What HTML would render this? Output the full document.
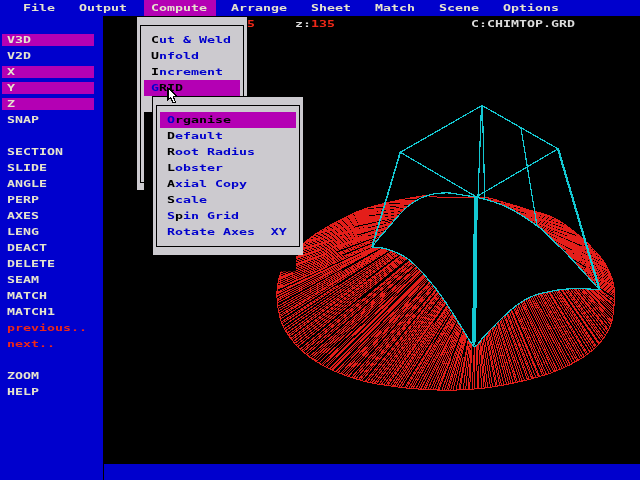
<!DOCTYPE html>
<html><head><meta charset="utf-8"><title>CHIMTOP.GRD</title>
<style>
html,body{margin:0;padding:0}
body{width:640px;height:480px;background:#000;overflow:hidden;position:relative}
div{position:absolute}
.t{white-space:pre;font:bold 9.2px "DejaVu Sans Mono","Liberation Mono",monospace;line-height:8px;height:8px;transform:scaleX(1.4445);transform-origin:0 0;will-change:transform;margin-left:-0.6px}
.t b{font-weight:bold}
.bar{background:#b400b4;left:2px;width:92px;height:12px}
</style></head><body>
<div style="left:0;top:0;width:640px;height:16px;background:#0000cd"></div>
<div style="left:0;top:16px;width:103px;height:464px;background:#0000cd"></div>
<div style="left:104px;top:464px;width:536px;height:16px;background:#0000cd"></div>
<div style="left:144px;top:0;width:72px;height:16px;background:#b400b4"></div>

<div class="bar" style="top:34px"></div>
<div class="bar" style="top:66px"></div>
<div class="bar" style="top:82px"></div>
<div class="bar" style="top:98px"></div>
<div class="t " style="left:24px;top:4px;color:#e6e4cd">File</div>
<div class="t " style="left:80px;top:4px;color:#e6e4cd">Output</div>
<div class="t " style="left:152px;top:4px;color:#e6e4cd">Compute</div>
<div class="t " style="left:232px;top:4px;color:#e6e4cd">Arrange</div>
<div class="t " style="left:312px;top:4px;color:#e6e4cd">Sheet</div>
<div class="t " style="left:376px;top:4px;color:#e6e4cd">Match</div>
<div class="t " style="left:440px;top:4px;color:#e6e4cd">Scene</div>
<div class="t " style="left:504px;top:4px;color:#e6e4cd">Options</div>
<div class="t " style="left:8px;top:36px;color:#e6e4cd">V3D</div>
<div class="t " style="left:8px;top:52px;color:#e6e4cd">V2D</div>
<div class="t " style="left:8px;top:68px;color:#e6e4cd">X</div>
<div class="t " style="left:8px;top:84px;color:#e6e4cd">Y</div>
<div class="t " style="left:8px;top:100px;color:#e6e4cd">Z</div>
<div class="t " style="left:8px;top:116px;color:#e6e4cd">SNAP</div>
<div class="t " style="left:8px;top:148px;color:#e6e4cd">SECTION</div>
<div class="t " style="left:8px;top:164px;color:#e6e4cd">SLIDE</div>
<div class="t " style="left:8px;top:180px;color:#e6e4cd">ANGLE</div>
<div class="t " style="left:8px;top:196px;color:#e6e4cd">PERP</div>
<div class="t " style="left:8px;top:212px;color:#e6e4cd">AXES</div>
<div class="t " style="left:8px;top:228px;color:#e6e4cd">LENG</div>
<div class="t " style="left:8px;top:244px;color:#e6e4cd">DEACT</div>
<div class="t " style="left:8px;top:260px;color:#e6e4cd">DELETE</div>
<div class="t " style="left:8px;top:276px;color:#e6e4cd">SEAM</div>
<div class="t " style="left:8px;top:292px;color:#e6e4cd">MATCH</div>
<div class="t " style="left:8px;top:308px;color:#e6e4cd">MATCH1</div>
<div class="t " style="left:8px;top:324px;color:#ee2818">previous..</div>
<div class="t " style="left:8px;top:340px;color:#ee2818">next..</div>
<div class="t " style="left:8px;top:372px;color:#e6e4cd">ZOOM</div>
<div class="t " style="left:8px;top:388px;color:#e6e4cd">HELP</div>
<div class="t " style="left:248px;top:20px;color:#ee2818">5</div>
<div class="t " style="left:296px;top:20px;color:#dcdcdc">z:</div>
<div class="t " style="left:312px;top:20px;color:#ee2818">135</div>
<div class="t " style="left:472px;top:20px;color:#dcdcdc">C:CHIMTOP.GRD</div>
<svg width="640" height="480" viewBox="0 0 640 480" style="position:absolute;left:0;top:0">
<defs><clipPath id="rc"><path d="M426.0 195.7C430.0 195.7 430.2 196.9 440.0 197.2C449.8 197.5 475.0 196.8 485.0 197.5C495.0 198.2 494.2 199.7 500.0 201.2C505.8 202.8 515.0 205.5 520.0 207.0C525.0 208.5 526.2 209.2 530.0 210.3C533.8 211.4 538.7 212.2 543.0 213.6C547.3 215.0 551.7 216.7 556.0 219.0C560.3 221.3 564.7 224.4 569.0 227.6C573.3 230.8 577.6 234.1 582.0 238.0C586.4 241.9 591.2 246.7 595.1 251.0C599.0 255.3 602.7 259.4 605.5 264.0C608.3 268.6 610.5 273.7 612.0 278.3C613.5 282.9 614.3 286.6 614.6 291.4C614.9 296.2 614.6 301.2 613.9 307.0C613.2 312.8 613.1 319.7 610.3 326.2C607.5 332.7 602.7 340.1 597.2 345.9C591.7 351.6 585.2 356.2 577.5 360.7C569.8 365.2 561.1 369.2 551.2 372.8C541.4 376.4 529.3 379.5 518.4 382.0C507.5 384.5 496.5 386.5 485.6 387.9C474.7 389.3 463.7 390.0 452.8 390.2C441.9 390.4 429.6 389.8 420.0 389.2C410.4 388.6 404.4 387.9 395.0 386.6C385.6 385.3 374.2 384.0 363.8 381.2C353.3 378.5 341.4 374.2 332.5 370.3C323.6 366.4 316.9 362.2 310.6 357.8C304.4 353.4 299.4 348.7 295.0 343.8C290.6 338.8 286.7 333.3 284.0 328.1C281.3 322.9 279.9 317.7 278.8 312.5C277.6 307.3 277.1 301.6 276.9 296.9C276.7 292.2 277.1 288.6 277.8 284.4C278.5 280.2 279.5 275.6 280.9 271.9C282.3 268.2 284.0 265.1 286.0 262.0C288.0 258.9 290.1 256.0 293.0 253.0C295.9 250.0 300.5 246.4 303.5 243.8C306.5 241.1 307.6 239.7 311.0 237.2C314.4 234.7 318.8 231.9 324.1 228.8C329.4 225.6 336.6 221.5 342.9 218.4C349.1 215.3 355.7 212.2 361.6 210.0C367.5 207.8 373.6 206.3 378.5 204.9C383.4 203.5 386.8 202.7 391.0 201.8C395.2 200.8 399.3 200.0 403.5 199.2C407.7 198.5 412.2 197.6 416.0 197.0C419.8 196.4 422.0 195.7 426.0 195.7Z"/></clipPath><clipPath id="ns"><path clip-rule="evenodd" d="M0 0H640V480H0ZM372.0 247.0C372.7 246.1 374.3 243.9 376.0 241.8C377.7 239.6 380.2 236.6 382.2 234.2C384.3 231.9 386.4 229.8 388.5 227.4C390.6 225.0 392.7 222.3 394.8 219.9C396.8 217.5 398.9 215.2 401.0 213.0C403.1 210.8 405.2 208.5 407.2 206.8C409.3 205.0 411.4 203.8 413.5 202.4C415.6 201.0 417.7 199.7 419.8 198.6C421.8 197.5 423.7 196.9 426.0 196.1C428.3 195.3 431.0 194.4 433.5 193.9C436.0 193.4 438.2 193.2 441.0 193.1C443.8 192.9 446.4 192.7 450.0 193.0C453.6 193.3 458.3 194.3 462.5 195.0C466.7 195.7 470.8 196.2 475.0 197.0C479.2 197.8 483.3 198.8 487.5 200.0C491.7 201.2 495.8 202.6 500.0 204.2C504.2 205.9 508.3 207.8 512.5 210.0C516.7 212.2 520.8 214.8 525.0 217.5C529.2 220.2 534.5 224.1 537.5 226.2C540.5 228.4 539.9 227.7 543.0 230.5C546.1 233.3 551.7 238.9 556.0 243.2C560.3 247.5 564.7 251.6 569.0 256.2C573.3 260.8 576.9 264.9 582.0 270.5C587.1 276.1 596.7 286.6 599.6 289.8C597.1 289.6 588.5 288.9 584.4 288.8C580.3 288.6 578.1 288.7 575.0 288.8C571.9 288.8 568.7 288.9 565.6 289.1C562.5 289.4 559.4 289.8 556.2 290.2C553.1 290.8 550.0 291.4 546.9 292.1C543.8 292.8 540.6 293.4 537.5 294.4C534.4 295.4 531.2 296.5 528.1 298.1C525.0 299.7 521.9 301.6 518.8 303.8C515.6 305.9 512.4 308.7 509.4 311.2C506.4 313.8 503.4 316.7 501.0 319.1C498.6 321.5 496.8 323.3 494.8 325.4C492.7 327.5 490.6 329.4 488.5 331.6C486.4 333.8 484.1 336.3 482.2 338.5C480.4 340.7 478.6 343.4 477.2 344.8C475.9 346.1 474.5 346.2 474.0 346.5C473.3 345.6 471.5 343.7 469.8 341.0C468.0 338.3 465.6 333.8 463.5 330.4C461.4 327.0 459.3 323.7 457.2 320.4C455.2 317.1 453.1 313.6 451.0 310.4C448.9 307.2 446.8 304.0 444.8 301.0C442.7 298.0 440.2 294.5 438.5 292.2C436.8 290.0 436.4 289.3 434.8 287.2C433.1 285.2 430.6 282.2 428.5 279.8C426.4 277.2 424.3 274.5 422.2 272.2C420.2 270.0 418.1 268.0 416.0 266.0C413.9 264.0 411.8 262.1 409.8 260.4C407.7 258.7 405.6 257.2 403.5 256.0C401.4 254.8 399.3 253.8 397.2 252.9C395.2 252.0 393.1 251.1 391.0 250.4C388.9 249.7 386.8 249.0 384.8 248.5C382.7 248.0 380.6 247.8 378.5 247.5C376.4 247.2 373.1 247.1 372.0 247.0Z"/></clipPath></defs>
<g clip-path="url(#rc)" shape-rendering="crispEdges"><g clip-path="url(#ns)">
<path fill="none" stroke="#e41e1a" stroke-width="1" d="M487.9 198.3L718.6 165.9M589.5 184.5L718.8 167.0M532.8 192.5L718.9 168.0M646.5 178.3L719.0 169.1M504.4 196.5L719.2 170.1M618.2 183.2L719.3 171.2M561.4 190.3L719.4 172.3M675.3 178.2L719.5 173.3M490.2 198.5L719.7 174.4M604.3 187.1L719.8 175.5M547.3 193.1L719.9 176.5M661.4 183.0L720.0 177.6M518.8 196.3L720.1 178.6M633.0 187.0L720.2 179.7M576.0 192.1L720.2 180.8M690.3 184.1L720.3 181.8M488.0 199.2L720.4 182.9M597.5 192.0L720.5 184.0M540.3 196.1L720.5 185.0M654.8 189.8L720.6 186.1M511.8 198.1L720.7 187.2M626.2 192.8L720.7 188.2M569.0 195.9L720.8 189.3M683.5 191.8L720.8 190.4M497.5 199.3L720.9 191.4M612.0 195.8L720.9 192.5M554.8 197.9L720.9 193.6M669.3 195.8L720.9 194.7M526.1 199.1L721.0 195.7M640.7 197.8L721.0 196.8M583.4 199.1L721.0 197.9M698.0 199.0L721.0 198.9M488.0 200.0L721.0 200.0M594.2 200.5L721.0 201.1M536.9 200.5L721.0 202.1M651.5 202.3L721.0 203.2M508.2 200.6L721.0 204.3M622.8 203.2L720.9 205.3M565.5 202.3L720.9 206.4M680.0 206.2L720.9 207.5M493.9 200.6L720.9 208.6M608.4 205.2L720.8 209.6M551.1 203.3L720.8 210.7M665.6 209.1L720.7 211.8M522.5 202.4L720.7 212.8M636.9 209.1L720.6 213.9M579.7 206.3L720.5 215.0M694.0 214.3L720.5 216.0M488.0 200.8L720.4 217.1M601.0 209.3L720.3 218.2M543.8 205.3L720.2 219.2M658.0 215.1L720.2 220.3M515.2 203.4L720.1 221.4M629.3 214.1L720.0 222.4M572.2 209.3L719.9 223.5M686.2 221.2L719.8 224.5M500.9 202.6L719.7 225.6M614.8 215.2L719.5 226.7M557.8 209.3L719.4 227.7M671.6 223.1L719.3 228.8M529.3 206.5L719.2 229.9M643.0 221.2L719.0 230.9M586.1 214.5L718.9 232.0M699.5 230.4L718.8 233.0M487.9 201.7L718.6 234.1M591.2 216.7L718.5 235.2M534.4 208.7L718.3 236.2M647.7 226.4L718.1 237.3M506.1 204.8L718.0 238.3M619.1 223.3L717.8 239.4M562.5 214.5L717.6 240.4M675.4 234.3L717.5 241.5M491.9 202.8L717.3 242.5M604.6 223.3L717.1 243.6M548.2 213.4L716.9 244.6M660.7 235.1L716.7 245.7M519.9 208.5L716.5 246.7M632.3 231.1L716.3 247.8M576.0 220.3L716.1 248.8M688.1 244.1L715.9 249.9M487.7 202.5L715.6 250.9M596.7 226.2L715.4 252.0M540.7 214.3L715.2 253.0M652.4 239.9L715.0 254.1M512.6 208.5L714.7 255.1M624.1 234.9L714.5 256.2M568.3 222.2L714.2 257.2M679.5 249.8L714.0 258.2M498.6 205.6L713.7 259.3M609.6 233.9L713.5 260.3M554.0 220.2L713.2 261.3M664.7 249.7L712.9 262.4M526.2 213.4L712.7 263.4M636.7 243.8L712.4 264.4M581.2 229.2L712.1 265.5M691.4 260.8L711.8 266.5M487.5 203.3L711.5 267.5M591.2 233.6L711.2 268.6M536.1 217.8L710.9 269.6M645.7 251.1L710.6 270.6M508.5 209.9L710.3 271.6M617.9 244.1L710.0 272.7M563.1 227.5L709.7 273.7M672.1 262.8L709.3 274.7M494.7 206.1L709.0 275.7M603.5 242.1L708.7 276.7M549.0 224.4L708.3 277.7M657.4 261.6L708.0 278.8M521.7 215.7L707.7 279.8M629.8 253.7L707.3 280.8M575.6 235.3L706.9 281.8M683.3 274.4L706.6 282.8M487.8 204.3L706.2 283.8M595.3 244.0L705.9 284.8M541.4 224.5L705.5 285.8M648.5 265.3L705.1 286.8M514.4 214.8L704.7 287.8M621.2 256.5L704.3 288.8M567.6 236.1L704.0 289.8M673.9 279.0L703.6 290.8M500.9 210.1L703.2 291.8M607.3 253.7L702.8 292.8M554.2 232.4L702.4 293.8M661.0 277.6L701.9 294.7M527.7 222.0L701.5 295.7M634.7 268.2L701.1 296.7M581.4 245.8L700.7 297.7M688.7 293.6L700.3 298.7M487.0 204.9L699.8 299.7M584.3 248.8L699.4 300.6M530.6 224.9L698.9 301.6M638.3 274.8L698.5 302.6M503.8 213.0L698.0 303.5M611.7 264.0L697.6 304.5M557.8 239.0L697.1 305.5M665.9 291.6L696.7 306.4M490.4 207.0L696.2 307.4M598.6 260.5L695.7 308.4M544.5 234.2L695.3 309.3M653.0 289.2L694.8 310.3M517.5 221.2L694.3 311.2M626.1 277.3L693.8 312.2M571.9 249.9L693.3 313.1M680.7 307.7L692.8 314.1M486.6 205.6L692.3 315.0M592.5 262.6L691.8 316.0M538.1 233.7L691.3 316.9M647.1 293.9L690.8 317.8M510.9 219.4L690.3 318.8M620.0 280.6L689.8 319.7M565.5 250.6L689.2 320.6M674.6 313.5L688.7 321.6M497.3 212.3L688.2 322.5M608.0 277.0L687.6 323.4M553.7 245.7L687.1 324.3M667.5 313.9L686.6 325.3M526.8 230.6L686.0 326.2M642.8 301.2L685.5 327.1M586.3 267.6L684.9 328.0M486.2 206.4L683.8 329.8M600.9 278.8L683.2 330.7M541.4 241.7L682.6 331.6M664.7 321.3L682.1 332.5M511.8 223.2L681.5 333.4M637.0 305.5L680.9 334.3M575.4 265.8L680.3 335.2M497.0 214.2L679.1 337.0M630.4 305.1L678.5 337.9M566.9 262.5L677.9 338.8M536.2 242.2L676.7 340.5M616.7 300.4L675.5 342.3M462.8 205.9L252.2 299.7M283.4 284.7L251.7 298.7M375.3 243.8L251.3 297.7M421.6 223.1L250.5 295.7M257.7 291.6L250.1 294.7M343.2 255.0L249.6 293.8M445.6 212.3L248.8 291.8M292.9 273.0L248.4 290.8M370.2 241.7L248.0 289.8M409.2 225.6L247.3 287.8M261.6 281.2L246.9 286.8M336.8 252.0L246.5 285.8M464.7 204.1L245.8 283.8M326.8 253.6L245.4 282.8M399.2 227.2L245.1 281.8M259.0 275.8L244.7 280.8M435.4 214.0L244.3 279.8M297.5 260.6L244.0 278.8M367.6 236.3L243.7 277.7M453.7 207.3L243.0 275.7M320.7 249.7L242.7 274.7M388.1 227.7L242.3 273.7M258.4 267.6L242.0 272.7M422.2 216.4L241.7 271.6M293.3 255.0L241.4 270.6M358.1 234.9L241.1 269.6M462.7 203.8L240.5 267.5M335.0 239.8L240.2 266.5M399.1 221.3L239.9 265.5M272.1 255.6L239.6 264.4M431.2 212.0L239.3 263.4M304.8 245.1L239.1 262.4M368.3 227.8L238.8 261.3M447.3 207.1L238.3 259.3M322.3 237.6L238.0 258.2M385.1 221.8L237.8 257.2M260.9 250.7L237.5 256.2M416.6 213.7L237.3 255.1M293.0 241.4L237.0 254.1M355.3 226.8L236.8 253.0M464.3 202.5L236.4 250.9M350.6 226.1L236.1 249.9M411.9 213.0L235.9 248.8M290.6 236.9L235.7 247.8M442.6 206.5L235.5 246.7M322.0 229.2L235.3 245.7M382.6 217.3L235.1 244.6M262.9 238.5L234.9 243.6M458.0 203.2L234.7 242.5M338.5 223.6L234.5 241.5M398.3 213.0L234.4 240.4M279.0 232.1L234.2 239.4M428.2 207.6L234.0 238.3M309.1 225.7L233.9 237.3M368.8 216.0L233.7 236.2M249.8 232.8L233.5 235.2M464.1 201.7L233.4 234.1M346.7 217.6L233.2 233.0M406.2 209.2L233.1 232.0M287.6 224.0L233.0 230.9M436.0 204.9L232.8 229.9M317.6 218.7L232.7 228.8M376.9 211.3L232.6 227.7M258.8 223.8L232.5 226.7M450.9 202.6L232.3 225.6M332.9 214.4L232.2 224.5M392.0 208.1L232.1 223.5M274.4 218.5L232.0 222.4M421.6 204.8L231.9 221.4M304.2 214.3L231.8 220.3M363.0 208.9L231.8 219.2M246.0 217.1L231.7 218.2M464.0 200.8L231.6 217.1M352.5 208.1L231.5 216.0M411.0 204.0L231.5 215.0M294.4 210.3L231.4 213.9M440.3 201.9L231.3 212.8M324.0 207.3L231.3 211.8M382.3 204.1L231.2 210.7M266.3 208.2L231.2 209.6M454.9 200.7L231.1 208.6M339.2 204.2L231.1 207.5M397.2 202.1L231.1 206.4M281.9 204.2L231.1 205.3M426.2 200.9L231.0 204.3M311.2 202.2L231.0 203.2M368.9 200.9L231.0 202.1M254.3 201.0L231.0 201.1M462.3 200.0L231.0 200.0M347.8 199.4L231.0 198.9M405.1 199.4L231.0 197.9M290.5 197.6L231.0 196.8M433.7 199.3L231.0 195.7M319.1 196.6L231.1 194.7M376.4 197.4L231.1 193.6M261.9 193.5L231.1 192.5M448.0 199.0L231.1 191.4M333.5 194.4L231.2 190.4M390.8 196.3L231.2 189.3M276.4 190.4L231.3 188.2M419.5 197.0L231.3 187.2M305.1 190.3L231.4 186.1M362.3 193.0L231.5 185.0M248.0 185.1L231.5 184.0M464.0 199.2L231.6 182.9M361.1 191.5L231.7 181.8M418.2 195.5L231.8 180.8M304.0 185.7L231.8 179.7M446.8 197.4L231.9 178.6M332.7 186.8L232.0 177.6M389.8 191.7L232.1 176.5M275.8 179.8L232.2 175.5M461.1 198.4L232.3 174.4M347.2 185.9L232.5 173.3M404.2 191.8L232.6 172.3M290.4 178.0L232.7 171.2M432.7 194.7L232.8 170.1M319.0 180.0L233.0 169.1M375.9 186.8L233.1 168.0M262.4 170.9L233.2 167.0M464.1 198.3L233.4 165.9M354.8 182.4L233.5 164.8M411.6 190.4L233.7 163.8M298.4 172.7L233.9 162.7M440.0 194.3L234.0 161.7M326.9 175.7L234.2 160.6M383.5 184.5L234.4 159.6M270.6 164.7L234.5 158.5M454.2 196.2L234.7 157.5M341.4 175.7L234.9 156.4M397.9 185.5L235.1 155.4M285.4 163.8L235.3 154.3M426.1 190.3L235.5 153.3M313.8 167.7L235.7 152.2M370.1 178.4L235.9 151.2M258.0 154.7L236.1 150.1M464.3 197.5L236.4 149.1M359.9 174.8L236.6 148.0M415.9 186.7L236.8 147.0M304.2 161.1L237.0 145.9M443.9 192.6L237.3 144.9M332.4 166.2L237.5 143.8M388.3 178.9L237.8 142.8M277.1 151.3L238.0 141.8M458.0 195.5L238.3 140.7M346.9 167.2L238.5 139.7M402.5 181.0L238.8 138.7M291.8 151.5L239.1 137.6M430.4 187.8L239.3 136.6M319.9 157.4L239.6 135.6M375.3 172.1L239.9 134.5M265.1 140.5L240.2 133.5M464.5 196.7L240.5 132.5M355.0 164.7L240.8 131.4M410.1 180.5L241.1 130.4M300.5 147.2L241.4 129.4M437.7 188.3L241.7 128.4M328.3 154.1L242.0 127.3M383.1 170.7L242.3 126.3M274.1 135.4L242.7 125.3M451.5 192.0L243.0 124.3M342.7 156.1L243.3 123.3M397.3 173.7L243.7 122.3M288.9 136.5L244.0 121.2M424.6 182.3L244.3 120.2M316.5 144.3L244.7 119.2M370.7 162.7L245.1 118.2M263.0 123.5L245.4 117.2M464.7 195.9L245.8 116.2M366.2 159.5L246.1 115.2M420.0 179.1L246.5 114.2M313.0 138.2L246.9 113.2M447.0 188.9L247.3 112.2M340.2 147.2L247.7 111.2M393.7 167.6L248.0 110.2M287.5 124.8L248.4 109.2M598.9 289.3L615.8 300.9M597.3 289.1L615.7 302.9M594.8 288.7L615.6 306.2M593.6 288.6L615.5 307.8M591.1 288.2L615.4 311.0M589.4 288.0L615.3 313.2M587.8 287.8L615.2 315.2M585.4 287.5L615.0 318.4M584.0 287.3L614.8 320.2M581.6 287.1L614.4 323.2M580.1 287.0L614.0 325.1M578.2 286.9L613.4 327.5M575.9 286.8L612.4 330.3M573.6 286.7L611.3 333.0M572.5 286.7L610.7 334.3M570.5 286.6L609.5 336.6M568.2 286.5L608.1 339.2M565.9 286.5L606.6 341.7M564.5 286.5L605.6 343.3M562.8 286.6L604.4 345.0M560.3 286.7L602.5 347.6M559.5 286.8L601.8 348.5M556.8 287.0L599.5 351.2M555.5 287.2L598.5 352.3M553.9 287.4L596.9 353.8M552.1 287.6L595.2 355.4M550.1 288.0L593.2 357.1M547.7 288.4L590.8 359.1M546.6 288.6L589.7 360.0M544.4 289.0L587.3 361.7M542.5 289.4L585.3 363.0M541.0 289.7L583.6 364.1M539.0 290.1L581.4 365.5M537.7 290.4L580.0 366.4M536.0 290.9L578.0 367.5M534.1 291.5L575.7 368.8M531.9 292.3L573.1 370.2M530.4 292.8L571.3 371.1M528.8 293.4L569.3 372.1M526.9 294.3L566.8 373.2M525.4 295.1L564.9 374.1M524.0 295.9L562.9 374.9M521.9 297.1L560.1 376.0M520.5 298.0L558.0 376.8M519.4 298.7L556.4 377.4M517.6 300.0L553.8 378.3M516.1 301.0L551.6 379.1M514.4 302.4L548.9 379.9M513.1 303.5L546.8 380.5M512.1 304.4L545.1 381.0M510.1 306.1L541.9 381.9M509.5 306.7L540.8 382.2M507.9 308.1L538.1 382.9M506.3 309.6L535.4 383.5M505.4 310.4L533.9 383.9M503.8 312.0L531.1 384.5M502.9 312.9L529.4 384.9M501.1 314.8L526.2 385.6M499.8 316.2L523.8 386.1M498.7 317.3L521.7 386.5M497.2 318.9L519.0 387.0M496.3 319.8L517.4 387.3M494.8 321.5L514.6 387.9M493.6 322.8L512.4 388.2M492.4 324.1L510.1 388.6M491.2 325.3L507.9 389.0M489.6 327.0L505.0 389.4M488.3 328.4L502.5 389.8M487.4 329.4L500.8 390.0M486.1 331.0L498.2 390.4M485.3 331.9L496.7 390.6M483.7 333.8L493.4 391.0M482.5 335.2L491.1 391.2M481.2 337.0L488.3 391.5M480.2 338.4L486.1 391.7M479.5 339.4L484.5 391.8M478.4 341.0L482.0 392.0M477.0 342.7L479.2 392.1M476.1 343.4L477.7 392.2M474.0 344.4L474.8 392.5M474.0 344.4L474.7 392.5M473.2 355.1L472.8 392.7M472.2 341.9L469.4 393.1M471.7 341.2L467.9 393.2M470.9 339.9L465.2 393.5M470.1 338.6L462.5 393.7M469.2 337.0L459.3 394.0M468.9 336.3L458.0 394.1M463.3 356.6L455.0 394.3M467.4 333.1L451.8 394.5M466.8 331.9L449.4 394.7M466.1 330.6L446.9 394.8M465.7 329.8L445.3 394.8M465.1 328.4L442.6 394.9M464.4 327.2L440.2 395.0M450.9 358.6L436.9 395.0M463.2 324.8L435.5 395.0M462.5 323.6L433.0 395.0M461.9 322.3L430.4 395.0M461.2 321.0L427.9 395.0M460.4 319.6L425.1 395.0M459.7 318.3L422.4 394.9M450.6 334.6L420.4 394.9M458.5 315.9L417.7 394.8M457.8 314.7L415.3 394.8M457.1 313.4L412.5 394.7M456.3 311.8L409.5 394.5M455.7 310.8L407.4 394.4M455.1 309.7L405.2 394.3M433.6 342.7L402.6 394.1M454.0 307.5L400.9 394.0M452.9 305.7L397.2 393.7M452.3 304.6L394.9 393.4M451.6 303.3L392.3 393.2M450.9 302.1L390.0 392.9M450.4 301.2L388.1 392.7M433.8 323.0L385.6 392.5M448.9 298.6L382.8 392.2M448.4 297.8L381.2 392.0M447.7 296.6L378.8 391.8M446.9 295.3L376.1 391.5M446.2 294.2L373.7 391.2M445.4 292.9L371.0 390.8M428.0 313.7L369.0 390.5M444.0 290.7L366.4 390.1M443.2 289.5L364.0 389.7M442.4 288.2L361.2 389.2M441.8 287.3L359.3 388.8M440.6 285.5L355.7 388.0M440.0 284.5L353.7 387.4M414.2 313.5L352.0 387.0M438.5 282.5L349.3 386.3M437.7 281.3L347.0 385.6M437.0 280.4L344.9 385.0M435.8 278.8L341.6 383.9M434.9 277.7L339.1 383.1M434.3 276.9L337.5 382.5M409.5 301.7L335.1 381.7M432.8 275.0L333.4 381.1M431.9 273.7L330.7 380.1M431.1 272.7L328.6 379.3M430.0 271.2L325.5 378.0M429.5 270.6L324.2 377.5M428.8 269.6L322.1 376.6M388.1 306.6L318.7 375.0M427.0 267.4L317.5 374.4M425.8 266.1L314.9 373.0M425.2 265.4L313.4 372.2M424.0 264.1L310.6 370.6M422.8 262.9L308.0 369.0M421.9 262.0L306.1 367.8M387.1 291.8L304.2 366.6M420.2 260.4L302.6 365.5M419.4 259.6L300.9 364.2M418.0 258.3L298.2 362.2M417.1 257.6L296.6 360.9M416.0 256.5L294.5 359.1M415.2 255.9L293.2 357.9M360.6 299.3L291.5 356.3M412.6 254.0L289.0 353.8M411.6 253.3L287.5 352.2M410.4 252.6L285.9 350.4M409.3 251.9L284.4 348.5M408.1 251.3L282.9 346.7M407.3 250.8L281.9 345.3M366.2 279.5L280.2 343.0M404.9 249.8L279.3 341.5M403.7 249.3L278.0 339.5M402.2 248.7L276.6 337.0M400.9 248.2L275.5 334.9M399.2 247.7L274.2 332.1M397.7 247.2L273.1 329.4M338.4 284.9L272.6 327.8M395.0 246.4L271.7 324.6M393.6 246.1L271.1 322.2M392.7 245.9L270.8 320.7M391.5 245.6L270.4 318.4M390.1 245.4L269.9 315.9M388.7 245.2L269.6 313.5M341.6 270.6L269.3 311.0M385.2 244.9L269.1 307.4M383.8 244.9L269.0 305.0M382.6 244.8L268.9 303.0M381.0 244.8L269.0 300.2M379.4 244.8L269.1 297.5M378.6 244.9L269.2 296.0M327.1 267.1L269.5 292.8"/>
</g></g>
<path fill="none" stroke="#e41e1a" stroke-width="1" shape-rendering="crispEdges" d="M426.0 195.7C430.0 195.7 430.2 196.9 440.0 197.2C449.8 197.5 475.0 196.8 485.0 197.5C495.0 198.2 494.2 199.7 500.0 201.2C505.8 202.8 515.0 205.5 520.0 207.0C525.0 208.5 526.2 209.2 530.0 210.3C533.8 211.4 538.7 212.2 543.0 213.6C547.3 215.0 551.7 216.7 556.0 219.0C560.3 221.3 564.7 224.4 569.0 227.6C573.3 230.8 577.6 234.1 582.0 238.0C586.4 241.9 591.2 246.7 595.1 251.0C599.0 255.3 602.7 259.4 605.5 264.0C608.3 268.6 610.5 273.7 612.0 278.3C613.5 282.9 614.3 286.6 614.6 291.4C614.9 296.2 614.6 301.2 613.9 307.0C613.2 312.8 613.1 319.7 610.3 326.2C607.5 332.7 602.7 340.1 597.2 345.9C591.7 351.6 585.2 356.2 577.5 360.7C569.8 365.2 561.1 369.2 551.2 372.8C541.4 376.4 529.3 379.5 518.4 382.0C507.5 384.5 496.5 386.5 485.6 387.9C474.7 389.3 463.7 390.0 452.8 390.2C441.9 390.4 429.6 389.8 420.0 389.2C410.4 388.6 404.4 387.9 395.0 386.6C385.6 385.3 374.2 384.0 363.8 381.2C353.3 378.5 341.4 374.2 332.5 370.3C323.6 366.4 316.9 362.2 310.6 357.8C304.4 353.4 299.4 348.7 295.0 343.8C290.6 338.8 286.7 333.3 284.0 328.1C281.3 322.9 279.9 317.7 278.8 312.5C277.6 307.3 277.1 301.6 276.9 296.9C276.7 292.2 277.1 288.6 277.8 284.4C278.5 280.2 279.5 275.6 280.9 271.9C282.3 268.2 284.0 265.1 286.0 262.0C288.0 258.9 290.1 256.0 293.0 253.0C295.9 250.0 300.5 246.4 303.5 243.8C306.5 241.1 307.6 239.7 311.0 237.2C314.4 234.7 318.8 231.9 324.1 228.8C329.4 225.6 336.6 221.5 342.9 218.4C349.1 215.3 355.7 212.2 361.6 210.0C367.5 207.8 373.6 206.3 378.5 204.9C383.4 203.5 386.8 202.7 391.0 201.8C395.2 200.8 399.3 200.0 403.5 199.2C407.7 198.5 412.2 197.6 416.0 197.0C419.8 196.4 422.0 195.7 426.0 195.7Z"/>
<rect x="270" y="255" width="26" height="16.5" fill="#000"/>
<g fill="none" stroke="#14c8d2" stroke-width="1.2" stroke-linejoin="round" shape-rendering="crispEdges">
<path d="M372.0 247.0C372.7 246.1 374.3 243.9 376.0 241.8C377.7 239.6 380.2 236.6 382.2 234.2C384.3 231.9 386.4 229.8 388.5 227.4C390.6 225.0 392.7 222.3 394.8 219.9C396.8 217.5 398.9 215.2 401.0 213.0C403.1 210.8 405.2 208.5 407.2 206.8C409.3 205.0 411.4 203.8 413.5 202.4C415.6 201.0 417.7 199.7 419.8 198.6C421.8 197.5 423.7 196.9 426.0 196.1C428.3 195.3 431.0 194.4 433.5 193.9C436.0 193.4 438.2 193.2 441.0 193.1C443.8 192.9 446.4 192.7 450.0 193.0C453.6 193.3 458.3 194.3 462.5 195.0C466.7 195.7 470.8 196.2 475.0 197.0C479.2 197.8 483.3 198.8 487.5 200.0C491.7 201.2 495.8 202.6 500.0 204.2C504.2 205.9 508.3 207.8 512.5 210.0C516.7 212.2 520.8 214.8 525.0 217.5C529.2 220.2 534.5 224.1 537.5 226.2C540.5 228.4 539.9 227.7 543.0 230.5C546.1 233.3 551.7 238.9 556.0 243.2C560.3 247.5 564.7 251.6 569.0 256.2C573.3 260.8 576.9 264.9 582.0 270.5C587.1 276.1 596.7 286.6 599.6 289.8"/><path d="M599.6 289.8C597.1 289.6 588.5 288.9 584.4 288.8C580.3 288.6 578.1 288.7 575.0 288.8C571.9 288.8 568.7 288.9 565.6 289.1C562.5 289.4 559.4 289.8 556.2 290.2C553.1 290.8 550.0 291.4 546.9 292.1C543.8 292.8 540.6 293.4 537.5 294.4C534.4 295.4 531.2 296.5 528.1 298.1C525.0 299.7 521.9 301.6 518.8 303.8C515.6 305.9 512.4 308.7 509.4 311.2C506.4 313.8 503.4 316.7 501.0 319.1C498.6 321.5 496.8 323.3 494.8 325.4C492.7 327.5 490.6 329.4 488.5 331.6C486.4 333.8 484.1 336.3 482.2 338.5C480.4 340.7 478.6 343.4 477.2 344.8C475.9 346.1 474.5 346.2 474.0 346.5"/><path d="M474.0 346.5C473.3 345.6 471.5 343.7 469.8 341.0C468.0 338.3 465.6 333.8 463.5 330.4C461.4 327.0 459.3 323.7 457.2 320.4C455.2 317.1 453.1 313.6 451.0 310.4C448.9 307.2 446.8 304.0 444.8 301.0C442.7 298.0 440.2 294.5 438.5 292.2C436.8 290.0 436.4 289.3 434.8 287.2C433.1 285.2 430.6 282.2 428.5 279.8C426.4 277.2 424.3 274.5 422.2 272.2C420.2 270.0 418.1 268.0 416.0 266.0C413.9 264.0 411.8 262.1 409.8 260.4C407.7 258.7 405.6 257.2 403.5 256.0C401.4 254.8 399.3 253.8 397.2 252.9C395.2 252.0 393.1 251.1 391.0 250.4C388.9 249.7 386.8 249.0 384.8 248.5C382.7 248.0 380.6 247.8 378.5 247.5C376.4 247.2 373.1 247.1 372.0 247.0"/>
<path d="M400.3 152.3L482 105.5L558 148.8L476.3 196.8Z"/>
<path d="M481.5 105.5L478 197M482.4 105.5L484.8 199"/>
<path d="M521 128.3L537 226"/>
<path stroke-width="1.6" d="M400.3 152.3L372 247"/>
<path stroke-width="2.2" d="M558 148.8L599.6 289.8"/>
<path stroke-width="3.4" d="M476.1 196.8L475.6 236"/>
<path stroke-width="4" d="M475.1 234L474.8 308"/>
<path stroke-width="4" d="M474.2 308L474 342"/>
<path fill="#14c8d2" stroke="none" d="M472 341H476L474 347Z"/>
</g>
</svg>
<div style="left:137px;top:17px;width:110px;height:173px;background:#cccacf"></div>
<div style="left:140px;top:25px;width:102px;height:156px;border:1px solid #000"></div>
<div style="left:144px;top:112px;width:8px;height:78px;background:#000"></div>
<div style="left:144px;top:80px;width:96px;height:16px;background:#b400b4"></div>
<div class="t" style="left:152px;top:36px;color:#0000cd"><b style="color:#000">C</b>ut &amp; Weld</div>
<div class="t" style="left:152px;top:52px;color:#0000cd"><b style="color:#000">U</b>nfold</div>
<div class="t" style="left:152px;top:68px;color:#0000cd"><b style="color:#000">I</b>ncrement</div>
<div class="t" style="left:152px;top:84px;color:#000"><b style="color:#0000cd">G</b>RID</div>
<div style="left:152px;top:96px;width:151px;height:159px;background:#000"></div>
<div style="left:153px;top:97px;width:150px;height:158px;background:#cccacf"></div>
<div style="left:156px;top:105px;width:142px;height:140px;border:1px solid #000"></div>
<div style="left:160px;top:112px;width:136px;height:16px;background:#b400b4"></div>
<div class="t" style="left:168px;top:116px;color:#000"><b style="color:#0000cd">O</b>rganise</div>
<div class="t" style="left:168px;top:132px;color:#0000cd"><b style="color:#000">D</b>efault</div>
<div class="t" style="left:168px;top:148px;color:#0000cd"><b style="color:#000">R</b>oot Radius</div>
<div class="t" style="left:168px;top:164px;color:#0000cd"><b style="color:#000">L</b>obster</div>
<div class="t" style="left:168px;top:180px;color:#0000cd"><b style="color:#000">A</b>xial Copy</div>
<div class="t" style="left:168px;top:196px;color:#0000cd"><b style="color:#000">S</b>cale</div>
<div class="t" style="left:168px;top:212px;color:#0000cd">S<b style="color:#000">p</b>in Grid</div>
<div class="t" style="left:168px;top:228px;color:#0000cd">Rotate Axes  XY</div>
<svg width="12" height="18" viewBox="0 0 12 18" style="position:absolute;left:166px;top:86px"><path d="M2 1.8V13.8L4.6 11.4L6.8 16.2H9.5L7.3 10.7L10.3 9.9Z" fill="#fff" stroke="#000" stroke-width="1.1" shape-rendering="crispEdges"/></svg>
</body></html>
